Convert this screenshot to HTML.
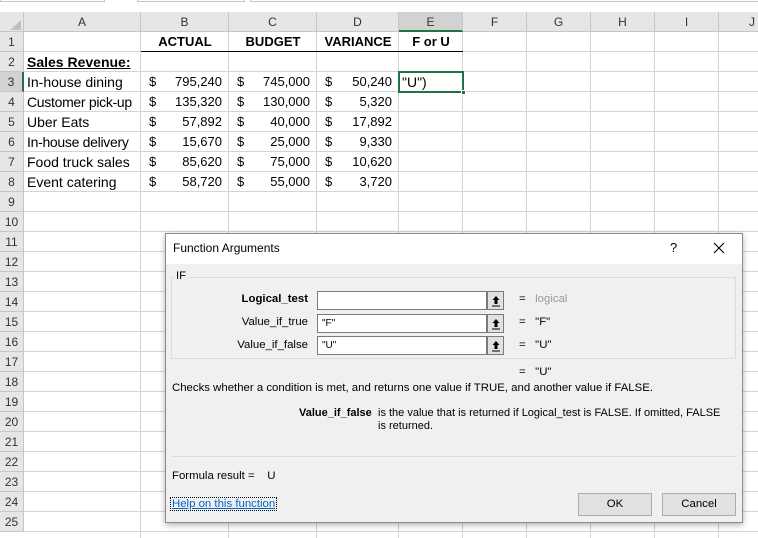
<!DOCTYPE html>
<html><head><meta charset="utf-8"><style>
*{margin:0;padding:0;box-sizing:border-box}
body{width:758px;height:538px;overflow:hidden;background:#fff;position:relative;font-family:"Liberation Sans",Arial,sans-serif}
.a{position:absolute;white-space:nowrap}
.vl{position:absolute;top:12px;width:1px;height:526px;background:#d4d4d4}
.hd{position:absolute;top:12px;height:20px;background:#e6e6e6;font-size:12px;color:#333;text-align:center;line-height:20px;border-right:1px solid #c6c6c6;border-bottom:1px solid #c6c6c6}
.rn{position:absolute;left:0;width:24px;height:20px;background:#e6e6e6;font-size:12px;color:#333;text-align:center;line-height:20px;border-right:1px solid #c6c6c6;border-bottom:1px solid #c6c6c6}
.c{position:absolute;font-size:14px;line-height:20px;color:#000;white-space:nowrap}
.n{font-size:13px}
.r{text-align:right}
.dl{font-family:"Liberation Sans",Arial,sans-serif;font-size:11.4px;color:#000}
.inp{position:absolute;left:317px;width:170px;height:19px;background:#fff;border:1px solid #7a7a7a;font-size:10px;line-height:17px;padding-left:4px}
.btn{position:absolute;left:487px;width:17px;height:19px;background:#e1e1e1;border:1px solid #7a7a7a}
.btn svg{position:absolute;left:3px;top:3px}
</style></head><body>
<div class="a" style="left:0;top:0;width:758px;height:12px;background:#fff"></div>
<div class="a" style="left:0;top:-2px;width:105px;height:4px;border:1px solid #c6c6c6"></div>
<div class="a" style="left:137px;top:-2px;width:108px;height:4px;border:1px solid #c6c6c6"></div>
<div class="a" style="left:250px;top:-2px;width:510px;height:4px;border:1px solid #c6c6c6"></div>
<div class="a" style="left:0;top:32px;width:758px;height:506px;background:repeating-linear-gradient(to bottom,transparent 0,transparent 19px,#d4d4d4 19px,#d4d4d4 20px)"></div>
<div class="vl" style="left:140px"></div><div class="vl" style="left:228px"></div><div class="vl" style="left:316px"></div><div class="vl" style="left:398px"></div><div class="vl" style="left:462px"></div><div class="vl" style="left:526px"></div><div class="vl" style="left:590px"></div><div class="vl" style="left:654px"></div><div class="vl" style="left:718px"></div>
<div class="hd" style="left:0;width:24px"></div>
<div class="a" style="left:10px;top:20px;width:0;height:0;border-left:11px solid transparent;border-bottom:10px solid #c0c0c0"></div>
<div class="hd" style="left:24px;width:117px">A</div>
<div class="hd" style="left:141px;width:88px">B</div>
<div class="hd" style="left:229px;width:88px">C</div>
<div class="hd" style="left:317px;width:82px">D</div>
<div class="hd" style="left:399px;width:64px;background:#d2d2d2;border-bottom:2px solid #217346">E</div>
<div class="hd" style="left:463px;width:64px">F</div>
<div class="hd" style="left:527px;width:64px">G</div>
<div class="hd" style="left:591px;width:64px">H</div>
<div class="hd" style="left:655px;width:64px">I</div>
<div class="hd" style="left:719px;width:64px;text-align:left;padding-left:30px">J</div>
<div class="rn" style="top:32px">1</div><div class="rn" style="top:52px">2</div>
<div class="rn" style="top:72px;background:#d2d2d2;border-right:2px solid #217346">3</div>
<div class="rn" style="top:92px">4</div><div class="rn" style="top:112px">5</div><div class="rn" style="top:132px">6</div><div class="rn" style="top:152px">7</div><div class="rn" style="top:172px">8</div><div class="rn" style="top:192px">9</div><div class="rn" style="top:212px">10</div><div class="rn" style="top:232px">11</div><div class="rn" style="top:252px">12</div><div class="rn" style="top:272px">13</div><div class="rn" style="top:292px">14</div><div class="rn" style="top:312px">15</div><div class="rn" style="top:332px">16</div><div class="rn" style="top:352px">17</div><div class="rn" style="top:372px">18</div><div class="rn" style="top:392px">19</div><div class="rn" style="top:412px">20</div><div class="rn" style="top:432px">21</div><div class="rn" style="top:452px">22</div><div class="rn" style="top:472px">23</div><div class="rn" style="top:492px">24</div><div class="rn" style="top:512px">25</div>
<div class="a" style="left:141px;top:51px;width:322px;height:1px;background:#000"></div>
<div class="c" style="left:141px;top:32px;width:88px;text-align:center;font-weight:bold;font-size:13px">ACTUAL</div>
<div class="c" style="left:229px;top:32px;width:88px;text-align:center;font-weight:bold;font-size:13px">BUDGET</div>
<div class="c" style="left:317px;top:32px;width:82px;text-align:center;font-weight:bold;font-size:13px">VARIANCE</div>
<div class="c" style="left:399px;top:32px;width:64px;text-align:center;font-weight:bold;font-size:13px">F or U</div>
<div class="c" style="left:27px;top:52px;font-weight:bold;text-decoration:underline">Sales Revenue:</div>
<div class="c" style="left:27px;top:72px">In-house dining</div>
<div class="c" style="left:27px;top:92px;letter-spacing:-0.3px">Customer pick-up</div>
<div class="c" style="left:27px;top:112px">Uber Eats</div>
<div class="c" style="left:27px;top:132px;letter-spacing:-0.3px">In-house delivery</div>
<div class="c" style="left:27px;top:152px">Food truck sales</div>
<div class="c" style="left:27px;top:172px">Event catering</div>
<div class="c n" style="left:149px;top:72px">$<br>$<br>$<br>$<br>$<br>$</div>
<div class="c n" style="left:237px;top:72px">$<br>$<br>$<br>$<br>$<br>$</div>
<div class="c n" style="left:325px;top:72px">$<br>$<br>$<br>$<br>$<br>$</div>
<div class="c n r" style="left:150px;top:72px;width:72px">795,240<br>135,320<br>57,892<br>15,670<br>85,620<br>58,720</div>
<div class="c n r" style="left:238px;top:72px;width:72px">745,000<br>130,000<br>40,000<br>25,000<br>75,000<br>55,000</div>
<div class="c n r" style="left:320px;top:72px;width:72px">50,240<br>5,320<br>17,892<br>9,330<br>10,620<br>3,720</div>
<div class="a" style="left:398px;top:71px;width:66px;height:22px;border:2px solid #217346"></div>
<div class="a" style="left:461px;top:90px;width:5px;height:5px;background:#217346;border:1px solid #fff"></div>
<div class="c" style="left:402px;top:72px">"U")</div>

<div class="a" style="left:165px;top:233px;width:578px;height:290px;background:#f0f0f0;border:1px solid #8a8a8a;box-shadow:0 2px 6px rgba(0,0,0,.3)"></div>
<div class="a" style="left:166px;top:234px;width:576px;height:30px;background:#fff"></div>
<div class="a dl" style="left:173px;top:241px;font-size:12px">Function Arguments</div>
<div class="a dl" style="left:670px;top:240px;font-size:13px">?</div>
<svg class="a" style="left:713px;top:242px" width="12" height="12" viewBox="0 0 12 12"><path d="M1 1L11 11M11 1L1 11" stroke="#000" stroke-width="1.1"/></svg>
<div class="a" style="left:171px;top:277px;width:565px;height:82px;border:1px solid #dcdcdc"></div>
<div class="a dl" style="left:174px;top:270px;background:#f0f0f0;padding:0 2px">IF</div>
<div class="a dl" style="left:200px;top:293px;width:108px;text-align:right;font-weight:bold">Logical_test</div>
<div class="a dl" style="left:200px;top:316px;width:108px;text-align:right">Value_if_true</div>
<div class="a dl" style="left:200px;top:339px;width:108px;text-align:right">Value_if_false</div>
<div class="inp" style="top:291px"></div><div class="btn" style="top:291px"><svg width="10" height="12" viewBox="0 0 10 12"><path d="M5 1L1.5 5H3.5V9H6.5V5H8.5Z" fill="#000"/><path d="M1 11H9" stroke="#000" stroke-width="1"/></svg></div>
<div class="inp" style="top:314px">"F"</div><div class="btn" style="top:314px"><svg width="10" height="12" viewBox="0 0 10 12"><path d="M5 1L1.5 5H3.5V9H6.5V5H8.5Z" fill="#000"/><path d="M1 11H9" stroke="#000" stroke-width="1"/></svg></div>
<div class="inp" style="top:336px">"U"</div><div class="btn" style="top:336px"><svg width="10" height="12" viewBox="0 0 10 12"><path d="M5 1L1.5 5H3.5V9H6.5V5H8.5Z" fill="#000"/><path d="M1 11H9" stroke="#000" stroke-width="1"/></svg></div>
<div class="a dl" style="left:519px;top:293px">=&nbsp;&nbsp; <span style="color:#999">logical</span></div>
<div class="a dl" style="left:519px;top:316px">=&nbsp;&nbsp; "F"</div>
<div class="a dl" style="left:519px;top:339px">=&nbsp;&nbsp; "U"</div>
<div class="a dl" style="left:519px;top:366px">=&nbsp;&nbsp; "U"</div>
<div class="a dl" style="left:172px;top:382px">Checks whether a condition is met, and returns one value if TRUE, and another value if FALSE.</div>
<div class="a dl" style="left:299px;top:407px;font-weight:bold;font-size:11px">Value_if_false</div>
<div class="a dl" style="left:378px;top:407px;line-height:13px;font-size:11px">is the value that is returned if Logical_test is FALSE. If omitted, FALSE<br>is returned.</div>
<div class="a" style="left:171px;top:456px;width:565px;height:1px;background:#dcdcdc"></div>
<div class="a dl" style="left:172px;top:470px">Formula result =&nbsp;&nbsp;&nbsp; U</div>
<div class="a dl" style="left:170px;top:497px;color:#0066cc;text-decoration:underline;border:1px dotted #000;padding:0 1px">Help on this function</div>
<div class="a dl" style="left:578px;top:493px;width:74px;height:23px;background:#e1e1e1;border:1px solid #adadad;text-align:center;line-height:21px">OK</div>
<div class="a dl" style="left:662px;top:493px;width:74px;height:23px;background:#e1e1e1;border:1px solid #adadad;text-align:center;line-height:21px">Cancel</div>
</body></html>
